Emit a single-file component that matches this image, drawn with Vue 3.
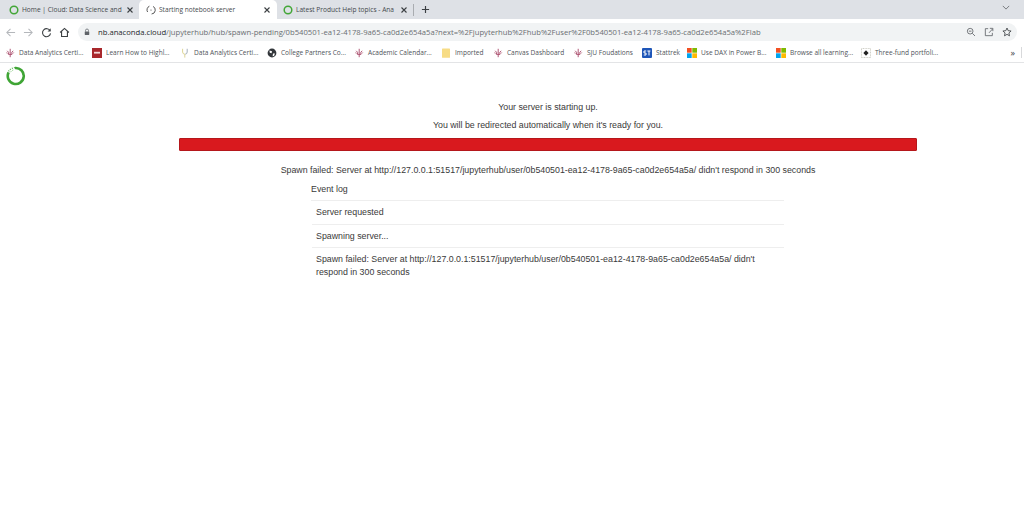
<script setup>
const tabs = [
  { title: 'Home | Cloud: Data Science and', icon: 'ring' },
  { title: 'Starting notebook server', icon: 'spin', active: true },
  { title: 'Latest Product Help topics - Ana', icon: 'ring' },
]

const bookmarks = [
  { label: 'Data Analytics Certi...', icon: 'sju', width: 87 },
  { label: 'Learn How to Highl...', icon: 'pdf', width: 88 },
  { label: 'Data Analytics Certi...', icon: 'fork', width: 87 },
  { label: 'College Partners Co...', icon: 'globe', width: 87 },
  { label: 'Academic Calendar...', icon: 'sju', width: 87 },
  { label: 'Imported', icon: 'folder', width: 52 },
  { label: 'Canvas Dashboard', icon: 'sju', width: 80 },
  { label: 'SJU Foudations', icon: 'sju', width: 69 },
  { label: 'Stattrek', icon: 'st', width: 45 },
  { label: 'Use DAX in Power B...', icon: 'ms', width: 89 },
  { label: 'Browse all learning...', icon: 'ms', width: 85 },
  { label: 'Three-fund portfoli...', icon: 'doc', width: 80 },
]

const events = [
  'Server requested',
  'Spawning server...',
  "Spawn failed: Server at http://127.0.0.1:51517/jupyterhub/user/0b540501-ea12-4178-9a65-ca0d2e654a5a/ didn't respond in 300 seconds",
]
</script>

<template>
  <div class="browser">
    <div class="tabstrip">
      <div
        v-for="tab in tabs"
        :key="tab.title"
        class="tab"
        :class="{ 'tab--active': tab.active }"
      >
        <svg v-if="tab.icon === 'ring'" class="tab__icon" viewBox="0 0 10 10">
          <circle cx="5" cy="5" r="3.8" fill="none" stroke="#43a637" stroke-width="1.5" />
        </svg>
        <svg v-else class="tab__icon" viewBox="0 0 10 10">
          <path d="M3.4 1.2A4 4 0 0 0 1.6 7M7 1.4A4 4 0 0 1 5.6 9" fill="none" stroke="#444" stroke-width="0.9" />
          <circle cx="5" cy="5" r="0.6" fill="#444" />
        </svg>
        <span class="tab__title">{{ tab.title }}</span>
        <svg class="tab__close" viewBox="0 0 8 8">
          <path d="M1.5 1.5L6.5 6.5M6.5 1.5L1.5 6.5" stroke="#3c4043" stroke-width="1.1" />
        </svg>
      </div>
      <span class="tabstrip__sep"></span>
      <svg class="tabstrip__new" viewBox="0 0 10 10">
        <path d="M5 1V9M1 5H9" stroke="#3c4043" stroke-width="1.3" />
      </svg>
      <svg class="tabstrip__chevron" viewBox="0 0 10 6">
        <path d="M1 1L5 5L9 1" fill="none" stroke="#5f6368" stroke-width="1" />
      </svg>
    </div>

    <div class="toolbar">
      <svg class="nav" viewBox="0 0 12 12">
        <path d="M11 6H2M6 2L2 6L6 10" fill="none" stroke="#b4b7bb" stroke-width="1.1" />
      </svg>
      <svg class="nav" viewBox="0 0 12 12">
        <path d="M1 6H10M6 2L10 6L6 10" fill="none" stroke="#b4b7bb" stroke-width="1.1" />
      </svg>
      <svg class="nav" viewBox="0 0 12 12">
        <path d="M10 4.2A4.4 4.4 0 1 0 10.4 7" fill="none" stroke="#3c4043" stroke-width="1.2" />
        <path d="M10.6 1.4V5H7.2Z" fill="#3c4043" />
      </svg>
      <svg class="nav" viewBox="0 0 12 12">
        <path d="M1.2 6L6 1.6L10.8 6M2.8 5V10.4H9.2V5" fill="none" stroke="#3c4043" stroke-width="1.2" />
      </svg>
      <div class="omnibox">
        <svg class="omnibox__lock" viewBox="0 0 8 10">
          <path d="M2 4.4V3A2 2 0 0 1 6 3V4.4" fill="none" stroke="#5f6368" stroke-width="1" />
          <rect x="1" y="4.2" width="6" height="4.8" rx="0.6" fill="#5f6368" />
        </svg>
        <span class="omnibox__url"><b>nb.anaconda.cloud</b>/jupyterhub/hub/spawn-pending/0b540501-ea12-4178-9a65-ca0d2e654a5a?next=%2Fjupyterhub%2Fhub%2Fuser%2F0b540501-ea12-4178-9a65-ca0d2e654a5a%2Flab</span>
        <svg class="omnibox__action" viewBox="0 0 12 12">
          <circle cx="5" cy="5" r="3.4" fill="none" stroke="#5f6368" stroke-width="1" />
          <path d="M7.6 7.6L10.8 10.8M3.4 5H6.6" stroke="#5f6368" stroke-width="1" />
        </svg>
        <svg class="omnibox__action" viewBox="0 0 12 12">
          <path d="M5 2H1.6V10.4H10V7M6 7L10.4 2.2M7 1.6H10.6V5" fill="none" stroke="#5f6368" stroke-width="1" />
        </svg>
        <svg class="omnibox__action omnibox__action--last" viewBox="0 0 12 12">
          <path d="M6 1.2L7.4 4.4L10.9 4.8L8.3 7.1L9 10.6L6 8.8L3 10.6L3.7 7.1L1.1 4.8L4.6 4.4Z" fill="none" stroke="#3c4043" stroke-width="1" />
        </svg>
      </div>
    </div>

    <div class="bookmarks">
      <div
        v-for="(mark, i) in bookmarks"
        :key="i"
        class="mark"
        :style="{ width: mark.width + 'px' }"
      >
        <svg v-if="mark.icon === 'sju'" class="mark__icon" viewBox="0 0 10 10">
          <path d="M5.2 0.8V9.2M3.4 6.4H7M2.2 2.8Q4.4 4 3.4 6.4M8.2 2.8Q6 4 7 6.4" fill="none" stroke="#a8486a" stroke-width="0.9" />
          <path d="M1 4.6L3 5.4M9.2 4.6L7.2 5.4" stroke="#c98a9b" stroke-width="0.8" />
        </svg>
        <svg v-else-if="mark.icon === 'pdf'" class="mark__icon" viewBox="0 0 10 10">
          <rect width="10" height="10" fill="#a8282c" />
          <rect y="3.8" x="2" width="6" height="1.8" fill="#f3d9d9" />
        </svg>
        <svg v-else-if="mark.icon === 'fork'" class="mark__icon" viewBox="0 0 10 10">
          <path d="M2.6 0.8V4Q2.6 6 4.8 6.2V9.6" fill="none" stroke="#d9cf8a" stroke-width="0.9" />
          <path d="M7.2 0.8V4Q7.2 6 5.2 6.2" fill="none" stroke="#9aa6b4" stroke-width="0.9" />
        </svg>
        <svg v-else-if="mark.icon === 'globe'" class="mark__icon" viewBox="0 0 10 10">
          <circle cx="5" cy="5" r="4.4" fill="#33373b" />
          <path d="M2.4 2.6L5 3.2L4.6 5.2L2.8 4.8ZM6 5.6L8 5.4L7 8L5.6 8.2Z" fill="#fff" />
        </svg>
        <svg v-else-if="mark.icon === 'folder'" class="mark__icon" viewBox="0 0 10 10">
          <rect x="1" y="0.4" width="8" height="9.4" rx="0.6" fill="#f7dc85" />
        </svg>
        <svg v-else-if="mark.icon === 'st'" class="mark__icon" viewBox="0 0 10 10">
          <rect width="10" height="10" rx="1" fill="#1f56b8" />
          <path d="M4.2 3H2V5H4V7H1.8M5.4 3H8.4M7 3V7.4" fill="none" stroke="#fff" stroke-width="1" />
        </svg>
        <svg v-else-if="mark.icon === 'ms'" class="mark__icon" viewBox="0 0 10 10">
          <rect width="4.7" height="4.7" fill="#f25022" />
          <rect x="5.3" width="4.7" height="4.7" fill="#7fba00" />
          <rect y="5.3" width="4.7" height="4.7" fill="#00a4ef" />
          <rect x="5.3" y="5.3" width="4.7" height="4.7" fill="#ffb900" />
        </svg>
        <svg v-else class="mark__icon" viewBox="0 0 10 10">
          <rect x="0.4" y="0.4" width="9.2" height="9.2" fill="#fff" stroke="#b5b5a8" stroke-width="0.7" stroke-dasharray="1 0.6" />
          <path d="M5 2.2L7.6 5L5 7.8L2.4 5Z" fill="#222" />
        </svg>
        <span class="mark__label">{{ mark.label }}</span>
      </div>
      <span class="bookmarks__more">»</span>
      <span class="bookmarks__sep"></span>
    </div>

    <div class="page">
      <div class="logo">
        <svg width="20" height="20" viewBox="0 0 20 20">
          <path d="M9 2A8 8 0 1 1 2.6 6.4" fill="none" stroke="#3fa535" stroke-width="2.6" />
          <path d="M9 1.6A8.4 8.4 0 0 0 2.2 6" fill="none" stroke="#6bbd62" stroke-width="1.4" stroke-dasharray="1.1 1.1" />
          <path d="M7.2 4A6.6 6.6 0 0 0 3.8 7.4" fill="none" stroke="#6bbd62" stroke-width="1" stroke-dasharray="1 1.4" />
        </svg>
      </div>

      <div class="content">
        <p class="msg msg--first">Your server is starting up.</p>
        <p class="msg msg--second">You will be redirected automatically when it's ready for you.</p>
        <div class="progress"></div>
        <p class="msg msg--failed">Spawn failed: Server at http://127.0.0.1:51517/jupyterhub/user/0b540501-ea12-4178-9a65-ca0d2e654a5a/ didn't respond in 300 seconds</p>

        <div class="log">
          <div class="log__heading">Event log</div>
          <div v-for="item in events" :key="item" class="log__item">{{ item }}</div>
        </div>
      </div>
    </div>
  </div>
</template>

<style>
html,
body {
  margin: 0;
  background: #fff;
}
</style>

<style scoped>
.browser {
  width: 1024px;
  height: 520px;
  overflow: hidden;
  background: #fff;
  font-family: "Open Sans", "Liberation Sans", sans-serif;
}

.tabstrip {
  height: 19px;
  padding-left: 4px;
  display: flex;
  background: #dee1e6;
}

.tab {
  width: 134px;
  height: 19px;
  padding: 0 4px 0 2px;
  box-sizing: border-box;
  display: flex;
  align-items: center;
  color: #45494d;
  font-size: 6.6px;
}

.tab--active {
  width: 138px;
  margin: 0 1px;
  padding: 0 6px 0 4px;
  background: #fff;
  border-radius: 5px 5px 0 0;
}

.tab__icon {
  width: 10px;
  height: 10px;
  margin: 0 3px;
  flex: none;
}

.tab__title {
  flex: 1;
  overflow: hidden;
  white-space: nowrap;
}

.tab__close {
  width: 8px;
  height: 8px;
  flex: none;
}

.tabstrip__sep {
  width: 1px;
  height: 12px;
  margin: 4px 0 0 1px;
  background: #a9acb0;
}

.tabstrip__new {
  width: 9px;
  height: 9px;
  margin: 5px 0 0 7px;
}

.tabstrip__chevron {
  width: 8px;
  height: 5px;
  margin: 5px 14px 0 auto;
}

.toolbar {
  height: 24px;
  padding: 2px 7px 0 5px;
  box-sizing: border-box;
  display: flex;
  align-items: center;
  background: #fff;
}

.nav {
  width: 11px;
  height: 11px;
  margin-right: 7px;
  flex: none;
}

.omnibox {
  flex: 1;
  height: 18px;
  margin-left: 1px;
  padding: 0 3px 0 6px;
  display: flex;
  align-items: center;
  background: #f1f3f4;
  border-radius: 9px;
}

.omnibox__lock {
  width: 6px;
  height: 8px;
  margin-right: 8px;
}

.omnibox__url {
  flex: 1;
  overflow: hidden;
  white-space: nowrap;
  color: #6a6e72;
  font-size: 7.67px;
}

.omnibox__url b {
  color: #25282b;
  font-weight: 400;
}

.omnibox__action {
  width: 10px;
  height: 10px;
  margin-left: 8px;
}

.omnibox__action--last {
  margin-right: 2px;
}

.bookmarks {
  height: 19px;
  padding-left: 5px;
  display: flex;
  align-items: center;
  background: #fff;
  border-bottom: 1px solid #e3e4e6;
}

.mark {
  display: flex;
  align-items: center;
  flex: none;
  color: #50545a;
  font-size: 6.55px;
}

.mark__icon {
  width: 10px;
  height: 10px;
  margin-right: 4px;
  flex: none;
}

.mark__label {
  white-space: nowrap;
}

.bookmarks__more {
  margin-left: auto;
  color: #3c4043;
  font-size: 9px;
}

.bookmarks__sep {
  width: 1px;
  height: 11px;
  margin: 0 2px 0 6px;
  background: #d8d9db;
}

.page {
  font-family: "Liberation Sans", Arial, sans-serif;
  font-size: 8.82px;
  line-height: 13px;
  color: #3a3a3a;
}

.logo {
  height: 20px;
  padding: 3px 0 0 6px;
}

.logo svg {
  display: block;
}

.content {
  width: 738px;
  margin-left: 179px;
  text-align: center;
}

.msg {
  margin: 0;
}

.msg--first {
  padding-top: 15px;
}

.msg--second {
  padding-top: 5px;
}

.progress {
  height: 13px;
  margin-top: 6px;
  background: #d9191e;
  border: 1px solid #b5171b;
  border-radius: 1px;
  box-sizing: border-box;
}

.msg--failed {
  margin-top: 13px;
}

.log {
  width: 472px;
  margin: 5px auto 0;
  text-align: left;
}

.log__heading {
  height: 19px;
  margin-left: -1px;
  padding-top: 1px;
  box-sizing: border-box;
  border-bottom: 1px solid #eee;
}

.log__item {
  padding: 5px 4px 4.5px;
  border-bottom: 1px solid #eee;
}

.log__item:last-child {
  border-bottom: 0;
}
</style>
